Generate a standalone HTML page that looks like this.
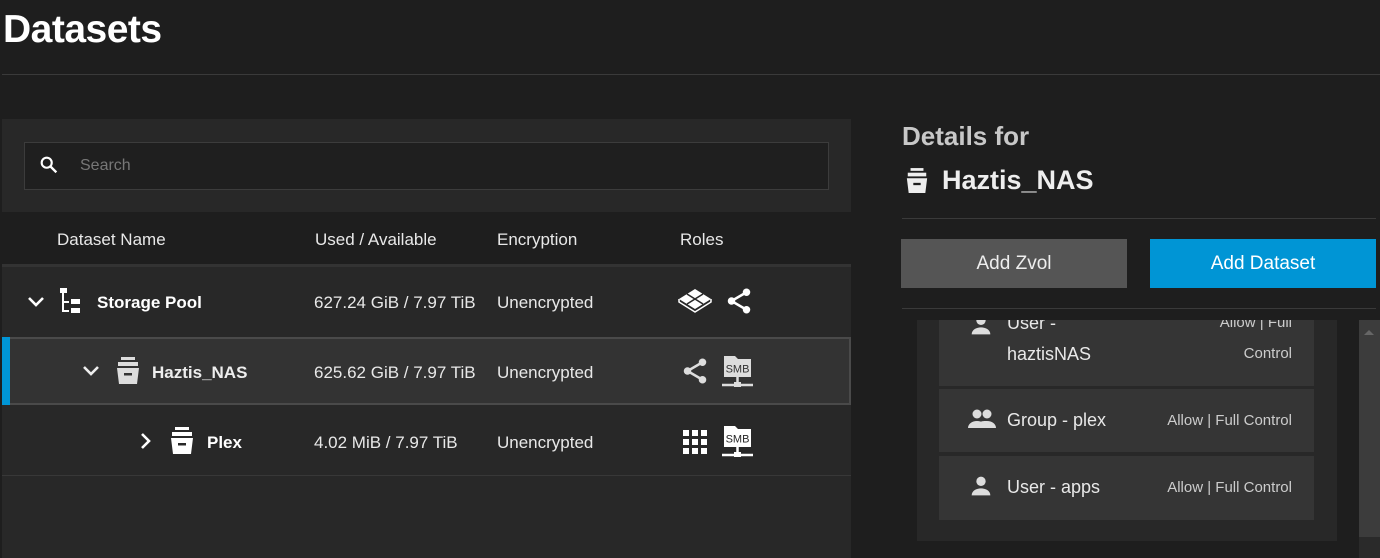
<!DOCTYPE html>
<html><head><style>
*{margin:0;padding:0;box-sizing:border-box}
body{width:1380px;height:558px;background:#1e1e1e;font-family:"Liberation Sans",sans-serif;color:#eee;position:relative;overflow:hidden}
.a{position:absolute}
.t{font-size:16px;color:#e8e8e8;white-space:nowrap}
.b{font-weight:bold}
</style></head><body>
<div class="a b" style="left:3px;top:8px;font-size:39px;color:#fff;letter-spacing:-0.5px">Datasets</div>
<div class="a" style="left:2px;top:74px;width:1378px;height:1px;background:#3a3a3a"></div>

<div class="a" style="left:2px;top:119px;width:849px;height:439px;background:#282828"></div>
<div class="a" style="left:24px;top:142px;width:805px;height:48px;background:#1f1f1f;border:1px solid #3c3c3c"></div>
<svg class="a" style="left:38px;top:154px" width="22" height="22" viewBox="0 0 24 24"><circle cx="9.5" cy="9.5" r="5.5" fill="none" stroke="#fff" stroke-width="2.3"/><path d="M13.5 13.5L20 20" stroke="#fff" stroke-width="2.6"/></svg>
<div class="a t" style="left:80px;top:157px;color:#777">Search</div>

<div class="a" style="left:2px;top:212px;width:849px;height:52px;background:#1e1e1e"></div>
<div class="a t" style="left:57px;top:230px;font-size:17px">Dataset Name</div>
<div class="a t" style="left:315px;top:230px;font-size:17px">Used / Available</div>
<div class="a t" style="left:497px;top:230px;font-size:17px">Encryption</div>
<div class="a t" style="left:680px;top:230px;font-size:17px">Roles</div>
<div class="a" style="left:2px;top:264px;width:849px;height:3px;background:#333"></div>

<!-- row1 -->
<svg class="a" style="left:26px;top:292px" width="20" height="20" viewBox="0 0 20 20"><path d="M3 6l7 7 7-7" fill="none" stroke="#fff" stroke-width="2.6"/></svg>
<svg class="a" style="left:60px;top:288px" width="28" height="28" viewBox="0 0 28 28"><rect x="0" y="0" width="7" height="5" fill="#fff"/><path d="M3 5v18h6M3 14h6" fill="none" stroke="#fff" stroke-width="2"/><rect x="11" y="11" width="9" height="5" fill="#fff"/><rect x="11" y="20" width="9" height="5" fill="#fff"/></svg>
<div class="a t b" style="left:97px;top:293px;color:#fff;font-size:17px">Storage Pool</div>
<div class="a t" style="left:314px;top:293px;font-size:17px">627.24 GiB / 7.97 TiB</div>
<div class="a t" style="left:497px;top:293px;font-size:17px">Unencrypted</div>
<svg class="a" style="left:677px;top:287px" width="36" height="26" viewBox="0 0 36 26"><path d="M18 2L34 12 18 22 2 12Z" fill="#fff"/><path d="M10 7l16 10M26 7L10 17" stroke="#282828" stroke-width="1.6"/><path d="M2 12v3l16 10 16-10v-3" fill="none" stroke="#fff" stroke-width="1.5"/></svg>
<svg class="a" style="left:724px;top:286px" width="30" height="30" viewBox="0 0 24 24"><circle cx="18" cy="5" r="3" fill="#fff"/><circle cx="6" cy="12" r="3" fill="#fff"/><circle cx="18" cy="19" r="3" fill="#fff"/><path d="M18 5L6 12l12 7" fill="none" stroke="#fff" stroke-width="2"/></svg>

<!-- row2 selected -->
<div class="a" style="left:2px;top:337px;width:849px;height:68px;background:#333;border:2px solid #4a4a4a;border-left:none"></div>
<div class="a" style="left:2px;top:337px;width:8px;height:68px;background:#0095d5"></div>
<svg class="a" style="left:81px;top:361px" width="20" height="20" viewBox="0 0 20 20"><path d="M3 6l7 7 7-7" fill="none" stroke="#eee" stroke-width="2.6"/></svg>
<svg class="a" style="left:115px;top:357px" width="26" height="28" viewBox="0 0 26 28"><rect x="6" y="0" width="14" height="3" fill="#ddd"/><rect x="3" y="5" width="20" height="4" fill="#ddd"/><path d="M2 11h22l-2 16H4Z" fill="#ddd"/><rect x="9" y="16" width="8" height="2.5" fill="#333"/></svg>
<div class="a t b" style="left:152px;top:363px;color:#eee;font-size:17px">Haztis_NAS</div>
<div class="a t" style="left:314px;top:363px;font-size:17px">625.62 GiB / 7.97 TiB</div>
<div class="a t" style="left:497px;top:363px;font-size:17px">Unencrypted</div>
<svg class="a" style="left:680px;top:356px" width="30" height="30" viewBox="0 0 24 24"><circle cx="18" cy="5" r="3" fill="#ddd"/><circle cx="6" cy="12" r="3" fill="#ddd"/><circle cx="18" cy="19" r="3" fill="#ddd"/><path d="M18 5L6 12l12 7" fill="none" stroke="#ddd" stroke-width="2"/></svg>
<svg class="a" style="left:721px;top:353px" width="36" height="36" viewBox="0 0 36 36"><path d="M3 3h11l3 3h13v18H3Z" fill="#ddd"/><text x="16.5" y="19.5" font-family="Liberation Sans" font-size="11" text-anchor="middle" fill="#333">SMB</text><path d="M16.5 24v6M1 32h31" stroke="#ddd" stroke-width="2.5"/><rect x="13" y="29" width="7" height="5" fill="#ddd"/></svg>

<!-- row3 -->
<svg class="a" style="left:136px;top:431px" width="20" height="20" viewBox="0 0 20 20"><path d="M6 3l7 7-7 7" fill="none" stroke="#fff" stroke-width="2.6"/></svg>
<svg class="a" style="left:169px;top:427px" width="26" height="28" viewBox="0 0 26 28"><rect x="6" y="0" width="14" height="3" fill="#fff"/><rect x="3" y="5" width="20" height="4" fill="#fff"/><path d="M2 11h22l-2 16H4Z" fill="#fff"/><rect x="9" y="16" width="8" height="2.5" fill="#282828"/></svg>
<div class="a t b" style="left:207px;top:433px;color:#fff;font-size:17px">Plex</div>
<div class="a t" style="left:314px;top:433px;font-size:17px">4.02 MiB / 7.97 TiB</div>
<div class="a t" style="left:497px;top:433px;font-size:17px">Unencrypted</div>
<svg class="a" style="left:683px;top:430px" width="24" height="24" viewBox="0 0 24 24" fill="#fff"><rect x="0" y="0" width="6" height="6"/><rect x="9" y="0" width="6" height="6"/><rect x="18" y="0" width="6" height="6"/><rect x="0" y="9" width="6" height="6"/><rect x="9" y="9" width="6" height="6"/><rect x="18" y="9" width="6" height="6"/><rect x="0" y="18" width="6" height="6"/><rect x="9" y="18" width="6" height="6"/><rect x="18" y="18" width="6" height="6"/></svg>
<svg class="a" style="left:721px;top:423px" width="36" height="36" viewBox="0 0 36 36"><path d="M3 3h11l3 3h13v18H3Z" fill="#fff"/><text x="16.5" y="19.5" font-family="Liberation Sans" font-size="11" text-anchor="middle" fill="#282828">SMB</text><path d="M16.5 24v6M1 32h31" stroke="#fff" stroke-width="2.5"/><rect x="13" y="29" width="7" height="5" fill="#fff"/></svg>
<div class="a" style="left:2px;top:475px;width:849px;height:1px;background:#383838"></div>

<!-- right -->
<div class="a b" style="left:902px;top:121px;font-size:26px;color:#c8c8c8">Details for</div>
<svg class="a" style="left:905px;top:168px" width="24" height="26" viewBox="0 0 26 28"><rect x="6" y="0" width="14" height="3" fill="#eee"/><rect x="3" y="5" width="20" height="4" fill="#eee"/><path d="M2 11h22l-2 16H4Z" fill="#eee"/><rect x="9" y="16" width="8" height="2.5" fill="#1e1e1e"/></svg>
<div class="a b" style="left:942px;top:165px;font-size:27px;color:#eee">Haztis_NAS</div>
<div class="a" style="left:902px;top:218px;width:474px;height:1px;background:#3a3a3a"></div>
<div class="a" style="left:901px;top:239px;width:226px;height:49px;background:#555;color:#eee;font-size:19px;text-align:center;line-height:50px">Add Zvol</div>
<div class="a" style="left:1150px;top:239px;width:226px;height:49px;background:#0095d5;color:#fff;font-size:19px;text-align:center;line-height:50px">Add Dataset</div>
<div class="a" style="left:902px;top:308px;width:474px;height:1px;background:#3a3a3a"></div>

<div class="a" style="left:917px;top:320px;width:420px;height:221px;background:#282828;overflow:hidden">
 <div class="a" style="left:22px;top:-10px;width:375px;height:76px;background:#353535"></div>
 <div class="a" style="left:22px;top:69px;width:375px;height:63px;background:#353535"></div>
 <div class="a" style="left:22px;top:136px;width:375px;height:64px;background:#353535"></div>
 <svg class="a" style="left:50px;top:-9px" width="28" height="28" viewBox="0 0 24 24"><circle cx="12" cy="8" r="4" fill="#ddd"/><path d="M4 20c0-4 4-6 8-6s8 2 8 6Z" fill="#ddd"/></svg>
 <div class="a t" style="left:90px;top:-7px;font-size:18px">User -</div>
 <div class="a t" style="left:90px;top:24px;font-size:18px">haztisNAS</div>
 <div class="a t" style="right:45px;top:-6px;font-size:15px;color:#ccc">Allow | Full</div>
 <div class="a t" style="right:45px;top:25px;font-size:15px;color:#ccc">Control</div>
 <svg class="a" style="left:50px;top:87px" width="30" height="24" viewBox="0 0 30 24"><circle cx="10" cy="7" r="4.5" fill="#ddd"/><circle cx="20" cy="7" r="4.5" fill="#ddd"/><path d="M1 21c0-4 4-7 9-7s9 3 9 7Z" fill="#ddd"/><path d="M14 14.5c2-.5 3-.5 6-.5 5 0 9 3 9 7H19" fill="#ddd"/></svg>
 <div class="a t" style="left:90px;top:90px;font-size:18px">Group - plex</div>
 <div class="a t" style="right:45px;top:92px;font-size:15px;color:#ccc">Allow | Full Control</div>
 <svg class="a" style="left:50px;top:152px" width="28" height="28" viewBox="0 0 24 24"><circle cx="12" cy="8" r="4" fill="#ddd"/><path d="M4 20c0-4 4-6 8-6s8 2 8 6Z" fill="#ddd"/></svg>
 <div class="a t" style="left:90px;top:157px;font-size:18px">User - apps</div>
 <div class="a t" style="right:45px;top:159px;font-size:15px;color:#ccc">Allow | Full Control</div>
</div>
<div class="a" style="left:1359px;top:320px;width:21px;height:217px;background:#3c3c3c"></div>
<svg class="a" style="left:1363px;top:328px" width="12" height="8"><path d="M1 7L6 2l5 5Z" fill="#666"/></svg>
<div class="a" style="left:1359px;top:537px;width:21px;height:21px;background:#2a2a2a"></div>
</body></html>
